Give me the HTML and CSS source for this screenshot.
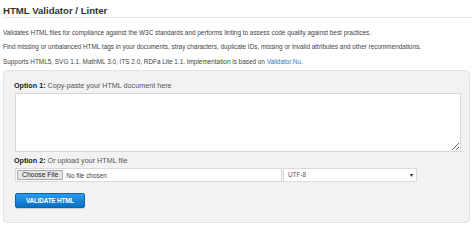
FILE: index.html
```html
<!DOCTYPE html>
<html lang="en">
<head>
    <meta charset="UTF-8">
    <title>HTML Validator / Linter</title>
    <link rel="stylesheet" href="styles.css">
</head>
<body>
    <div class="page">
        <h1 class="title">HTML Validator / Linter</h1>

        <p>Validates HTML files for compliance against the W3C standards and performs linting to assess code quality against best practices.</p>
        <p>Find missing or unbalanced HTML tags in your documents, stray characters, duplicate IDs, missing or invalid attributes and other recommendations.</p>
        <p>Supports HTML5, SVG 1.1, MathML 3.0, ITS 2.0, RDFa Lite 1.1. Implementation is based on <a href="#">Validator.Nu</a>.</p>

        <form class="panel">
            <label class="option"><b>Option 1:</b> Copy-paste your HTML document here</label>
            <textarea class="source"></textarea>

            <label class="option option-2"><b>Option 2:</b> Or upload your HTML file</label>
            <div class="upload-row">
                <input type="file" class="file-input">
                <span class="select-wrap">
                    <select class="charset">
                        <option>UTF-8</option>
                    </select>
                </span>
            </div>

            <button type="button" class="validate-button">VALIDATE HTML</button>
        </form>
    </div>
</body>
</html>
```

FILE: styles.css
```css
* {
    margin: 0;
    padding: 0;
    box-sizing: border-box;
    font-family: 'Liberation Sans', Arial, sans-serif;
}

body {
    background: #fff;
    color: #333;
}

.page {
    width: 474px;
    padding: 0 2px 0 3px;
}

.title {
    font-size: 9.6px;
    line-height: 12px;
    font-weight: bold;
    color: #333;
    padding-top: 4.5px;
    border-bottom: 1px solid #e6e6e6;
    margin-bottom: 11.5px;
}

p {
    font-size: 6.4px;
    line-height: 8px;
    margin-bottom: 6.4px;
    color: #444;
}

p a {
    color: #2a7ac4;
    text-decoration: none;
}

/* bloc du formulaire */
.panel {
    display: flex;
    flex-direction: column;
    align-items: flex-start;
    width: 467px;
    margin-top: -2px;
    padding: 10px 10px 14px 10px;
    background: #f2f2f2;
    border: 1px solid #e3e3e3;
    border-radius: 4px;
}

.option {
    font-size: 7.2px;
    line-height: 9px;
    color: #555;
    margin-bottom: 2.5px;
}

.option b {
    color: #222;
}

.option-2 {
    margin-top: 4.5px;
}

.source {
    display: block;
    width: 446px;
    height: 59px;
    margin-left: 1px;
    background: #fff;
    border: 1px solid #d6d6d6;
    resize: vertical;
}

.upload-row {
    display: flex;
    align-items: flex-start;
    gap: 1px;
    margin-left: 1px;
    height: 14px;
}

.file-input {
    display: block;
    width: 267px;
    height: 14px;
    font-size: 6.4px;
    color: #444;
    background: #fff;
    border: 1px solid #d9d9d9;
    padding: 1px;
}

.file-input::file-selector-button {
    height: 10px;
    padding: 0 4px;
    margin-right: 3px;
    font-size: 6.8px;
    font-family: 'Liberation Sans', Arial, sans-serif;
    color: #222;
    background: #e6e6e6;
    border: 1px solid #a9a9a9;
    border-radius: 1px;
}

.select-wrap {
    position: relative;
    display: flex;
    height: 14px;
}

.select-wrap::after {
    content: '▾';
    position: absolute;
    right: 4px;
    top: 3px;
    font-size: 6px;
    line-height: 8px;
    color: #222;
    pointer-events: none;
}

.charset {
    display: block;
    appearance: none;
    -webkit-appearance: none;
    width: 134px;
    height: 14px;
    padding: 0 4px;
    font-size: 6.4px;
    color: #555;
    background: #fff;
    border: 1px solid #dcdcdc;
    border-radius: 0;
}

.validate-button {
    margin-top: 11px;
    margin-left: 1px;
    width: 70px;
    height: 15px;
    font-size: 6.4px;
    font-weight: bold;
    letter-spacing: -0.2px;
    color: #fff;
    background: linear-gradient(#2b9cec, #0b6fc4);
    border: 1px solid #0a64b0;
    border-radius: 2px;
    box-shadow: 0 1px 1px rgba(0, 0, 0, 0.15);
    cursor: pointer;
}
```
